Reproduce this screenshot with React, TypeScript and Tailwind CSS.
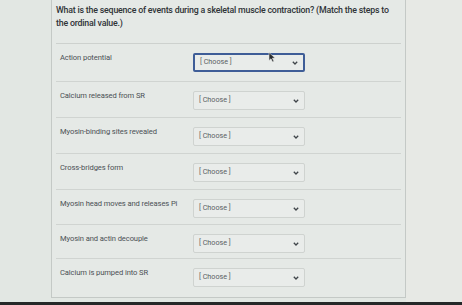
import React from "react";

const rows = [
  { label: "Action potential", h: "h-[38px]" },
  { label: "Calcium released from SR", h: "h-[36px]" },
  { label: "Myosin-binding sites revealed", h: "h-[36px]" },
  { label: "Cross-bridges form", h: "h-[36px]" },
  { label: "Myosin head moves and releases Pi", h: "h-[35px]" },
  { label: "Myosin and actin decouple", h: "h-[34px]" },
  { label: "Calcium is pumped into SR", h: "h-[33px]" },
];

function Chevron() {
  return (
    <svg width="6" height="4" viewBox="0 0 6 4" className="shrink-0">
      <path d="M0.8 0.8 L3 3 L5.2 0.8" fill="none" stroke="#3f4449" strokeWidth="1.3" />
    </svg>
  );
}

export default function App() {
  return (
    <div
      className="relative w-[462px] h-[305px] overflow-hidden bg-[#e2e7e3] flex flex-col"
      style={{ fontFamily: "Roboto, 'Liberation Sans', sans-serif" }}
    >
      <div className="flex-1 flex">
        <div className="ml-[51px] w-[355px] h-[298px] border-x border-b border-[#c4c9c6] bg-[#e5e9e6] flex flex-col">
          <div className="pl-[4px] pr-[8px] pt-[4px] text-[8.8px] leading-[13px] text-[#2f3337] font-medium tracking-[-0.2px]">
            What is the sequence of events during a skeletal muscle contraction? (Match the steps to the ordinal value.)
          </div>
          <div className="mt-[13px] mx-[4px] h-px bg-[#cdd1ce]" />
          {rows.map((r, i) => (
            <div
              key={r.label}
              className={`${r.h} mx-[4px] flex items-start ${i < rows.length - 1 ? "border-b border-[#d0d4d1]" : ""}`}
            >
              <div className="w-[137px] pl-[4px] pt-[9px] text-[7.6px] leading-[10px] text-[#4b5055] tracking-[-0.1px] whitespace-nowrap">
                {r.label}
              </div>
              <div
                className={`mt-[9px] w-[112px] h-[19px] flex items-center justify-between pl-[5px] pr-[5px] rounded-[2px] bg-[#e9ecea] ${
                  i === 0 ? "border-2 border-[#3e5d97]" : "border border-[#cfd3d0]"
                }`}
              >
                <span className="text-[7.2px] text-[#5a5f64]">[ Choose ]</span>
                <Chevron />
              </div>
            </div>
          ))}
        </div>
        <div className="flex-1 bg-[#e7e9e5]" />
      </div>
      <div className="h-[3px] bg-[#262829]" />
      <svg
        className="absolute left-[268px] top-[52px]"
        width="8"
        height="11"
        viewBox="0 0 8 11"
      >
        <path d="M1 0.5 L1 8.5 L3 6.8 L4.6 10 L6 9.3 L4.4 6.2 L7 6 Z" fill="#2a2d30" stroke="#e5e8e6" strokeWidth="0.6" />
      </svg>
    </div>
  );
}
